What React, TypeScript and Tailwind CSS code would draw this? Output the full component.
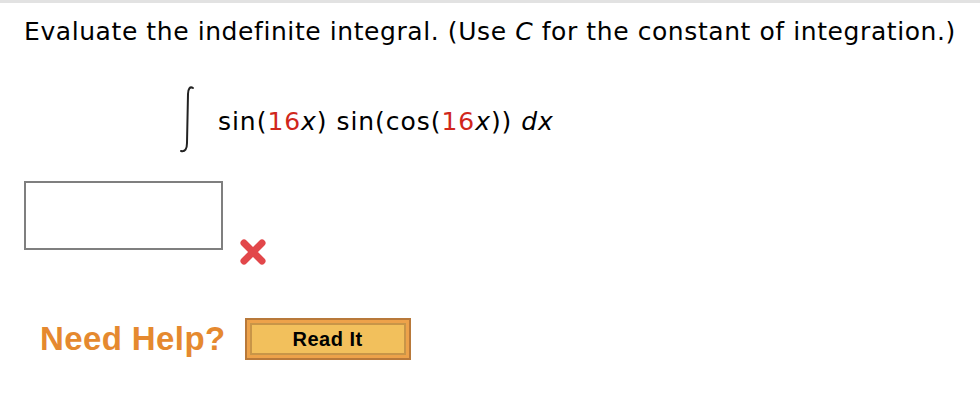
import React from "react";

export default function App() {
  return (
    <div className="w-[980px] h-[404px] bg-white overflow-hidden relative" style={{ fontFamily: "Verdana, 'DejaVu Sans', sans-serif" }}>
      <div className="h-[3px] bg-[#e2e2e2]" />
      <div className="pl-[24px] pt-[14px] text-[25px] leading-[30px] text-black tracking-[0.58px]">
        Evaluate the indefinite integral. (Use <i>C</i> for the constant of integration.)
      </div>
      <div className="flex items-center pl-[176px] mt-[38px] h-[70px]">
        <svg width="24" height="70" viewBox="0 0 24 70" className="shrink-0">
          <path d="M17 3 C 14 1, 12 4, 12 9 L 11 58 C 11 64, 9 67, 5 66" fill="none" stroke="#222" strokeWidth="2" strokeLinecap="round" />
        </svg>
        <div className="ml-[18px] text-[25px] text-black mt-[3px] tracking-[0.95px]">
          sin(<span className="text-[#d0261b]">16</span><i>x</i>) sin(cos(<span className="text-[#d0261b]">16</span><i>x</i>)) <i>dx</i>
        </div>
      </div>
      <div className="flex items-end pl-[24px] mt-[26px]">
        <div className="w-[199px] h-[69px] border-2 border-[#7f7f7f] bg-white" />
        <svg width="32" height="32" viewBox="0 0 32 32" className="ml-[14px] mb-[-18px]">
          <path d="M7 7 L25 25 M25 7 L7 25" stroke="#e2474a" strokeWidth="7" strokeLinecap="round" />
        </svg>
      </div>
      <div className="flex items-center pl-[40px] mt-[68px]">
        <span className="text-[33px] leading-[40px] font-bold text-[#e5892f] tracking-[0.4px]" style={{ fontFamily: "'Liberation Sans', Arial, sans-serif" }}>Need Help?</span>
        <button className="ml-[19px] w-[166px] h-[42px] border-2 border-[#b8793a] bg-[#eda24a] p-[3px]">
          <div className="w-full h-full border-2 border-[#c89548] bg-[#f2c05c] flex items-center justify-center text-[20px] font-bold text-black tracking-[0.5px]" style={{ fontFamily: "'Liberation Sans', Arial, sans-serif" }}>
            Read It
          </div>
        </button>
      </div>
    </div>
  );
}
